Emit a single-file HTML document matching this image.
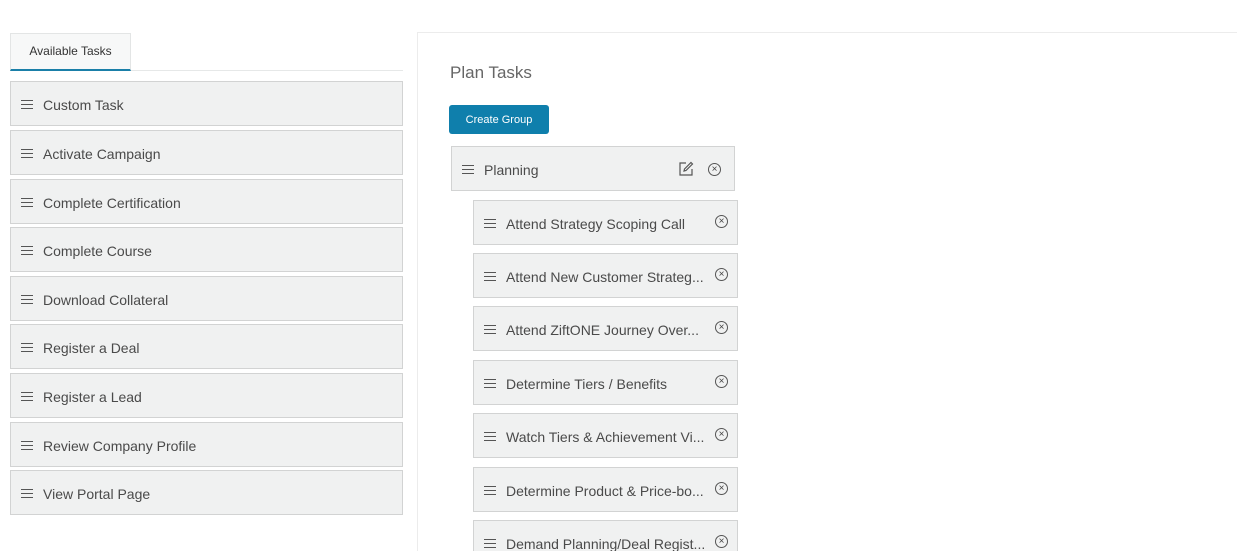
<!DOCTYPE html><html><head><style>
html,body{margin:0;width:1237px;height:551px;overflow:hidden}
body{background:#fff;font-family:"Liberation Sans",sans-serif;color:#444;position:relative}
.a{position:absolute;box-sizing:border-box}
.it{background:#f0f1f1;border:1px solid #d2d3d3;font-size:14px;color:#4a4a4a;display:flex;align-items:center;padding-top:2px}
.h{width:12px;height:10px;margin:0 10px 0 10px;position:relative;flex:none}
.h i{position:absolute;left:0;width:12px;height:1.4px;background:#555}
.x{position:absolute;width:11px;height:11px;border:1.3px solid #555;border-radius:50%;font-size:10px;line-height:11px;text-align:center;color:#444}
</style></head><body>
<div class="a" style="left:10px;top:33px;width:121px;height:38px;background:#f7f8f8;border:1px solid #e3e5e5;border-bottom:2px solid #1a7fa8;font-size:12px;color:#333;text-align:center;line-height:34px">Available Tasks</div>
<div class="a" style="left:131px;top:70px;width:272px;height:1px;background:#e6e8e8"></div>
<div class="a" style="left:417px;top:32px;width:820px;height:519px;border-left:1px solid #ececec;border-top:1px solid #ececec"></div>
<div class="a" style="left:450px;top:63px;font-size:17px;color:#666">Plan Tasks</div>
<div class="a" style="left:449px;top:105px;width:100px;height:29px;background:#0f7fac;border-radius:3px;color:#fff;font-size:11px;text-align:center;line-height:31px">Create Group</div>
<div class="a it" style="left:451px;top:146px;width:284px;height:45px"><span class="h"><i style="top:0"></i><i style="top:4px"></i><i style="top:8px"></i></span>Planning</div>
<svg class="a" style="left:678px;top:161px" width="16" height="16" viewBox="0 0 16 16" fill="none" stroke="#555" stroke-width="1.2"><path d="M8 2H2v12h12V8"/><path d="M13 1.5l1.5 1.5L8 9.5 6 10l.5-2z"/></svg>
<div class="x" style="left:708px;top:163px">×</div>
<div id="L"></div>
<script>
var l=["Custom Task","Activate Campaign","Complete Certification","Complete Course","Download Collateral","Register a Deal","Register a Lead","Review Company Profile","View Portal Page"],ly=[81,130,179,227,276,324,373,422,470],h='';
l.forEach(function(t,i){h+='<div class="a it" style="left:10px;top:'+ly[i]+'px;width:393px;height:45px"><span class="h"><i style="top:0"></i><i style="top:4px"></i><i style="top:8px"></i></span>'+t+'</div>'});
var r=["Attend Strategy Scoping Call","Attend New Customer Strateg...","Attend ZiftONE Journey Over...","Determine Tiers / Benefits","Watch Tiers &amp; Achievement Vi...","Determine Product &amp; Price-bo...","Demand Planning/Deal Regist..."],ry=[200,253,306,360,413,467,520];
r.forEach(function(t,i){h+='<div class="a it" style="left:473px;top:'+ry[i]+'px;width:265px;height:45px"><span class="h"><i style="top:0"></i><i style="top:4px"></i><i style="top:8px"></i></span>'+t+'</div><div class="x" style="left:715px;top:'+(ry[i]+15)+'px">×</div>'});
document.getElementById('L').innerHTML=h;
</script>
</body></html>
